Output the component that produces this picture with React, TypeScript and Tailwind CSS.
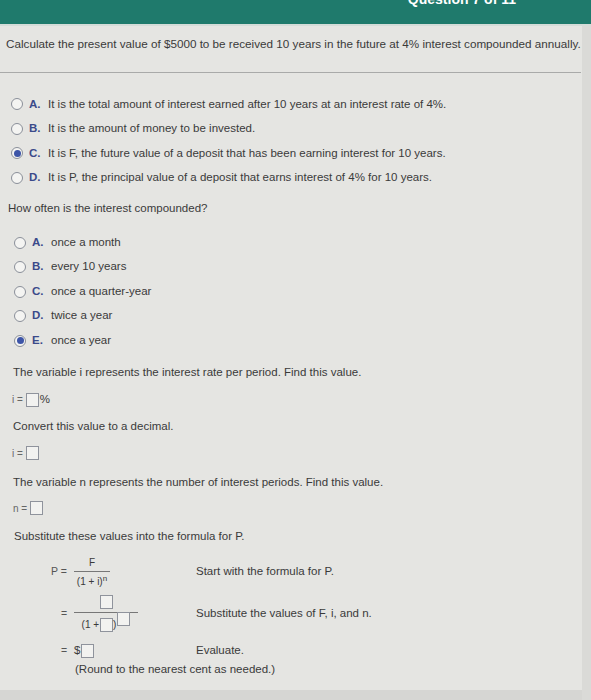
import React from 'react';

const font = { fontFamily: '"Liberation Sans", Arial, sans-serif' };

function Radio({ checked }: { checked?: boolean }) {
  return (
    <span className="flex h-[12px] w-[12px] shrink-0 items-center justify-center rounded-full border border-[#8a8f99] bg-[#f4f4f2]">
      {checked && <span className="h-[7px] w-[7px] rounded-full bg-[#3d55a8]" />}
    </span>
  );
}

function Option({ letter, text, checked }: { letter: string; text: string; checked?: boolean }) {
  return (
    <div className="flex h-[24.5px] items-center">
      <Radio checked={checked} />
      <span className="ml-[6px] w-[19px] font-bold text-[#3b4a8a]">{letter}</span>
      <span>{text}</span>
    </div>
  );
}

function Box({ className = '' }: { className?: string }) {
  return <span className={`inline-block h-[14px] w-[13px] border border-[#8f939c] bg-[#f2f2f0] ${className}`} />;
}

export default function App() {
  return (
    <div style={font} className="relative h-[700px] w-[591px] overflow-hidden bg-[#e5e5e2] text-[11.5px] text-[#3a3a3a]">
      <div className="flex h-[24px] justify-end overflow-hidden bg-[#1f7a6c] pr-[75px]">
        <span className="-mt-[11px] text-[14px] font-bold text-white">Question 7 of 11</span>
      </div>
      <div className="h-[2px] bg-[#d4dcd8]" />
      <div className="whitespace-nowrap pb-[21px] pl-[6px] pt-[11px] text-[11.7px] leading-[14px]">
        Calculate the present value of $5000 to be received 10 years in the future at 4% interest compounded annually.
      </div>
      <div className="mr-[10px] h-[1px] bg-[#a9aaa9]" />

      <div className="pl-[11px] pt-[19px]">
        <Option letter="A." text="It is the total amount of interest earned after 10 years at an interest rate of 4%." />
        <Option letter="B." text="It is the amount of money to be invested." />
        <Option letter="C." text="It is F, the future value of a deposit that has been earning interest for 10 years." checked />
        <Option letter="D." text="It is P, the principal value of a deposit that earns interest of 4% for 10 years." />
      </div>

      <div className="pl-[8px] pt-[10px]">How often is the interest compounded?</div>

      <div className="pl-[14px] pt-[13px]">
        <Option letter="A." text="once a month" />
        <Option letter="B." text="every 10 years" />
        <Option letter="C." text="once a quarter-year" />
        <Option letter="D." text="twice a year" />
        <Option letter="E." text="once a year" checked />
      </div>

      <div className="pl-[13px] pt-[11px]">The variable i represents the interest rate per period. Find this value.</div>
      <div className="flex items-center pl-[12px] pt-[10px]">
        <span className="text-[10px] text-[#666]">i =</span>
        <Box className="ml-[3px]" />
        <span className="ml-[1px]">%</span>
      </div>
      <div className="pl-[13px] pt-[10px]">Convert this value to a decimal.</div>
      <div className="flex items-center pl-[12px] pt-[10px]">
        <span className="text-[10px] text-[#666]">i =</span>
        <Box className="ml-[3px]" />
      </div>
      <div className="pl-[13px] pt-[13px]">The variable n represents the number of interest periods. Find this value.</div>
      <div className="flex items-center pl-[13px] pt-[10px]">
        <span className="text-[10px] text-[#666]">n =</span>
        <Box className="ml-[3px]" />
      </div>
      <div className="pl-[14px] pt-[12px]">Substitute these values into the formula for P.</div>

      <div className="grid grid-cols-[196px_1fr] pt-[10px]">
        <div className="flex items-center pl-[51px]">
          <span className="w-[23px] text-[10.5px] text-[#555]">P =</span>
          <div className="flex w-[36px] flex-col items-center text-[10px]">
            <span className="pb-[1px]">F</span>
            <span className="h-[1px] w-full bg-[#777]" />
            <span className="pt-[2px]">
              (1 + i)<sup className="text-[8px]">n</sup>
            </span>
          </div>
        </div>
        <div className="flex items-center">Start with the formula for P.</div>

        <div className="flex items-center pl-[61px] pt-[6px]">
          <span className="w-[13px] text-[10.5px] text-[#555]">=</span>
          <div className="flex w-[64px] flex-col items-center text-[10px]">
            <Box className="mb-[3px]" />
            <span className="h-[1px] w-full bg-[#777]" />
            <span className="flex items-end pt-[4px]">
              <span>(1 +</span>
              <Box className="ml-[1px]" />
              <span>)</span>
              <Box className="ml-[1px] -translate-y-[6px]" />
            </span>
          </div>
        </div>
        <div className="flex items-center pt-[6px]">Substitute the values of F, i, and n.</div>

        <div className="flex items-center pl-[61px] pt-[10px]">
          <span className="w-[13px] text-[10.5px] text-[#555]">=</span>
          <span>$</span>
          <Box className="ml-[1px]" />
        </div>
        <div className="flex items-end pt-[10px]">Evaluate.</div>
      </div>
      <div className="pl-[75px] pt-[2px]">(Round to the nearest cent as needed.)</div>

      <div className="absolute bottom-0 left-0 h-[10px] w-full bg-[#d6d6d3]" />
      <div className="absolute right-0 top-[26px] h-full w-[9px] bg-[#dadad7]" />
    </div>
  );
}
